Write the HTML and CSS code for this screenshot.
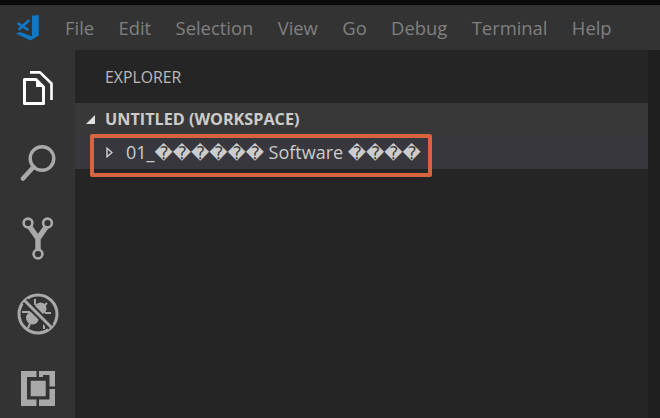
FILE: index.html
```html
<!DOCTYPE html>
<html lang="en">
<head>
    <meta charset="UTF-8">
    <meta name="viewport" content="width=device-width, initial-scale=1.0">
    <title>Explorer</title>
    <link rel="stylesheet" href="styles.css">
</head>
<body>
    <div class="window">
        <header class="titlebar">
            <svg class="logo" width="24" height="26" viewBox="0 0 24 26">
                <path fill="#1178c8" d="M16 .8L22.8 0v20.6L14.5 25.6 0 18.6l4-1.6 12 4.4z"/>
                <path fill="none" stroke="#1178c8" stroke-width="2.6" d="M13.4 5L2.6 14.8M1.6 8.2L12.4 15"/>
            </svg>
            <nav class="menu">
                <span>File</span>
                <span>Edit</span>
                <span>Selection</span>
                <span>View</span>
                <span>Go</span>
                <span>Debug</span>
                <span>Terminal</span>
                <span>Help</span>
            </nav>
        </header>
        <div class="main">
            <aside class="activitybar">
                <div class="slot">
                    <svg width="30" height="35" viewBox="0 0 30 35" fill="none" stroke="#fff" stroke-linejoin="round">
                        <path stroke-width="2.6" d="M7 1.4H17L28.5 12.5V29"/>
                        <path stroke-width="3" fill="#333" d="M1.5 8.5H13L20.5 16V32.5H1.5z"/>
                        <path fill="#fff" stroke="none" d="M13 8.5L20.5 16H13z"/>
                    </svg>
                </div>
                <div class="slot">
                    <svg width="36" height="37" viewBox="0 0 36 37" fill="none" stroke="#a9a9a9" stroke-linecap="round">
                        <circle cx="22" cy="13.5" r="11.8" stroke-width="3.4"/>
                        <path d="M13.5 22L3 33.5" stroke-width="4.6"/>
                    </svg>
                </div>
                <div class="slot">
                    <svg width="32" height="44" viewBox="0 0 32 44" fill="none" stroke="#a9a9a9">
                        <path d="M6.5 8l9.5 13.5L25.5 8M16 21v14" stroke-width="5.4"/>
                        <circle cx="6" cy="6" r="4.4" stroke-width="2.6" fill="#333"/>
                        <circle cx="25.5" cy="6" r="4.4" stroke-width="2.6" fill="#333"/>
                        <circle cx="16" cy="37" r="4.4" stroke-width="2.6" fill="#333"/>
                    </svg>
                </div>
                <div class="slot">
                    <svg width="42" height="42" viewBox="0 0 42 42" fill="none" stroke="#a9a9a9">
                        <circle cx="21" cy="21" r="19" stroke-width="3"/>
                        <g stroke-width="2">
                            <path d="M5 19H13M18 6V12M30 10L26 14M15 26L11 35M27 28V36M34 20H28"/>
                        </g>
                        <circle cx="15.5" cy="25" r="6.5" fill="#a9a9a9" stroke="none"/>
                        <circle cx="23.5" cy="15.5" r="6" fill="#a9a9a9" stroke="none"/>
                        <path d="M8 8L34 34" stroke="#333" stroke-width="7"/>
                        <path d="M7 7L35 35" stroke-width="3"/>
                    </svg>
                </div>
                <div class="slot">
                    <svg width="34" height="35" viewBox="0 0 34 35">
                        <path fill="#a9a9a9" d="M0 0h15.5v6H6v22.5h9.5V35H0zM18 0h16v15.5h-5.5V4H22v2h-4zM18 28.5h10.5V18H34v17H18zM9.7 9.7h15v15.5h-15z"/>
                    </svg>
                </div>
            </aside>
            <section class="sidebar">
                <div class="sidebar-title">EXPLORER</div>
                <div class="section-header">
                    <span class="twistie-open"></span>
                    <span>UNTITLED (WORKSPACE)</span>
                </div>
                <div class="tree-row">
                    <svg class="twistie-closed" width="7" height="11" viewBox="0 0 7 11">
                        <path d="M1 1.2L6 5.5 1 9.8z" fill="none" stroke="#d0d0d0" stroke-width="1.4"/>
                    </svg>
                    <span>01_<span class="bad">������</span> Software <span class="bad">����</span></span>
                </div>
                <div class="highlight"></div>
            </section>
            <div class="editor"></div>
        </div>
    </div>
</body>
</html>
```

FILE: styles.css
```css
* {
    box-sizing: border-box;
    margin: 0;
    padding: 0;
}

html, body {
    height: 100%;
    overflow: hidden;
}

body {
    font-family: "Open Sans", "DejaVu Sans", sans-serif;
    background-color: #0a0a0a;
}

.window {
    display: flex;
    flex-direction: column;
    height: 100%;
    padding-top: 5px;
}

.titlebar {
    display: flex;
    align-items: center;
    height: 45px;
    flex-shrink: 0;
    background-color: #333333;
    padding-left: 16px;
}

.logo {
    flex-shrink: 0;
}

.menu {
    display: flex;
    gap: 24.4px;
    margin-left: 25px;
    font-size: 18.4px;
    color: #808080;
}

.main {
    display: flex;
    flex: 1;
    min-height: 0;
}

.activitybar {
    display: flex;
    flex-direction: column;
    width: 75px;
    flex-shrink: 0;
    padding-top: 1px;
    background-color: #333333;
}

.slot {
    display: flex;
    align-items: center;
    justify-content: center;
    height: 75px;
    flex-shrink: 0;
}

.sidebar {
    position: relative;
    flex: 1;
    background-color: #252526;
}

.sidebar-title {
    display: flex;
    align-items: center;
    height: 53px;
    padding-left: 30px;
    font-size: 15.8px;
    color: #bbbbbb;
}

.section-header {
    display: flex;
    align-items: center;
    height: 32px;
    padding-left: 11px;
    font-size: 16.2px;
    font-weight: 700;
    color: #cccccc;
    background-color: #383838;
}

.twistie-open {
    width: 0;
    height: 0;
    margin-right: 10px;
    border-left: 9px solid transparent;
    border-bottom: 9px solid #e0e0e0;
}

.tree-row {
    display: flex;
    align-items: center;
    height: 34px;
    padding-left: 31px;
    font-size: 18px;
    color: #cccccc;
    background-color: #37373d;
}

.twistie-closed {
    margin-right: 13px;
    flex-shrink: 0;
}

.bad {
    font-family: "DejaVu Sans", sans-serif;
    font-size: 17.8px;
    line-height: 1;
}

.highlight {
    position: absolute;
    left: 15px;
    top: 84px;
    width: 342px;
    height: 43px;
    border: 4px solid #d9633f;
    border-radius: 2px;
}

.editor {
    width: 12px;
    flex-shrink: 0;
    background-color: #1e1e1e;
}
```
